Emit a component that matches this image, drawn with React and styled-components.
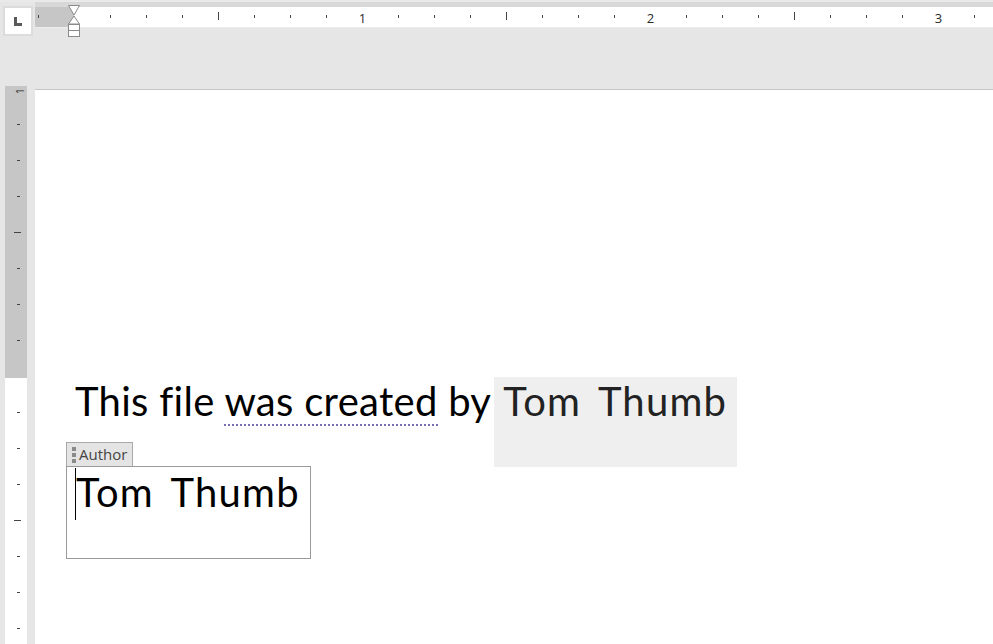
import styled, { createGlobalStyle } from 'styled-components'

const GlobalStyle = createGlobalStyle`
  html, body {
    margin: 0;
    padding: 0;
    overflow: hidden;
    background: #e6e6e6;
  }
`

const STEP = 36

const Window = styled.div`
  display: grid;
  grid-template-columns: 35px 1fr;
  grid-template-rows: 89px 1fr;
  width: 993px;
  height: 644px;
  background: #e6e6e6;
  font-family: Lato, 'Open Sans', sans-serif;
`

const Corner = styled.div`
  padding: 4px 0 0 3px;
  border-top: 2px solid #e9e9e9;
`

const TabButton = styled.div`
  display: grid;
  place-items: center;
  width: 26px;
  height: 26px;
  background: #fff;
  border: 2px solid #dcdcdc;
`

const TopArea = styled.div`
  position: relative;
  display: flex;
  flex-direction: column;
  border-top: 2px solid #e9e9e9;
`

const TopStrip = styled.div`
  height: 5px;
  background: #d8d8d8;
`

const RulerBand = styled.div`
  height: 20px;
  background: #fff;
  border-bottom: 1px solid #ededed;
`

const IndentMarker = styled.svg`
  position: absolute;
  left: 32px;
  top: 2px;
`

const SideArea = styled.div`
  margin-top: -3px;
  padding: 0 8px 0 5px;
`

const SideRuler = styled.div`
  height: 100%;
  background: #fff;
`

const Page = styled.main`
  background: #fff;
  border-top: 1px solid #c6c6c6;
  padding: 287px 0 0 31px;
`

const Content = styled.div`
  display: grid;
  grid-template-columns: auto auto;
  grid-template-rows: 65px auto;
  justify-content: start;
  color: #000;
  font-size: 40px;
  line-height: 45px;
  letter-spacing: 0.3px;
`

const Sentence = styled.div`
  grid-column: 1;
  grid-row: 1;
  padding: 2px 3px 0 9px;
  white-space: pre;
`

const Dotted = styled.span`
  padding-bottom: 1px;
  background-image: linear-gradient(to right, #7b6cb6 50%, transparent 50%);
  background-size: 4px 2px;
  background-repeat: repeat-x;
  background-position: 0 100%;
`

const Name = styled.span`
  white-space: pre;
  letter-spacing: 1.2px;
  word-spacing: -2.5px;
`

const Field = styled.div`
  grid-column: 2;
  grid-row: 1 / span 2;
  width: 243px;
  height: 90px;
  box-sizing: border-box;
  padding: 2px 0 0 9px;
  background: #efefef;
  color: #222;
`

const Control = styled.div`
  grid-column: 1;
  grid-row: 2;
  display: flex;
  flex-direction: column;
  align-items: flex-start;
`

const Tag = styled.div`
  display: flex;
  align-items: center;
  gap: 3px;
  height: 23px;
  padding: 0 5px 0 5px;
  background: #e4e4e4;
  border: 1px solid #a9a9a9;
  border-bottom: none;
  color: #444;
  font-family: 'Open Sans', 'Noto Sans', sans-serif;
  font-size: 15px;
  letter-spacing: 0;
`

const Grip = styled.div`
  display: flex;
  flex-direction: column;
  gap: 2px;
  span {
    width: 4px;
    height: 4px;
    background: #8a8a8a;
  }
`

const Box = styled.div`
  display: flex;
  align-items: flex-start;
  box-sizing: border-box;
  width: 245px;
  height: 93px;
  border: 1px solid #9a9a9a;
  padding-left: 8px;

  ${Name} {
    margin-top: 3px;
  }
`

const Caret = styled.span`
  width: 1px;
  height: 52px;
  margin-top: 1px;
  background: #000;
`

function HorizontalRuler() {
  const ticks = []
  for (let k = -1; 39 + k * STEP < 958; k++) {
    if (k === 0) continue
    const x = 39 + k * STEP + 0.5
    if (k % 8 === 0) {
      ticks.push(
        <text key={k} x={x} y={16} fontSize='13' fill='#2a2a2a' textAnchor='middle' fontFamily='Open Sans, sans-serif'>
          {k / 8}
        </text>
      )
    } else if (k % 4 === 0) {
      ticks.push(<line key={k} x1={x} x2={x} y1={5} y2={13} stroke='#444' />)
    } else {
      ticks.push(<line key={k} x1={x} x2={x} y1={8} y2={11} stroke='#444' />)
    }
  }
  return (
    <svg width='958' height='20' style={{ display: 'block' }}>
      <rect x='0' y='0' width='39' height='20' fill='#c6c6c6' />
      {ticks}
    </svg>
  )
}

function VerticalRuler() {
  const origin = 290
  const ticks = []
  for (let k = -8; origin + k * STEP < 560; k++) {
    if (k === 0) continue
    const y = origin + k * STEP + 0.5
    if (k === -8) {
      ticks.push(
        <text key={k} x={0} y={0} fontSize='11' fill='#2a2a2a' textAnchor='middle' fontFamily='Open Sans, sans-serif' transform='translate(19 5) rotate(-90)'>
          1
        </text>
      )
    } else if (k % 4 === 0) {
      ticks.push(<line key={k} x1={9} x2={16} y1={y} y2={y} stroke='#444' />)
    } else {
      ticks.push(<line key={k} x1={12} x2={15} y1={y} y2={y} stroke='#444' />)
    }
  }
  return (
    <svg width='22' height='560' style={{ display: 'block' }}>
      <rect x='0' y='0' width='22' height='292' fill='#c6c6c6' />
      {ticks}
    </svg>
  )
}

const App = () => {
  return (
    <>
      <GlobalStyle />
      <Window>
        <Corner>
          <TabButton>
            <svg width='10' height='10' viewBox='0 0 10 10'>
              <path d='M1 1h3v6h5v3H1z' fill='#5a5a5a' />
            </svg>
          </TabButton>
        </Corner>
        <TopArea>
          <TopStrip />
          <RulerBand>
            <HorizontalRuler />
          </RulerBand>
          <IndentMarker width='14' height='34' viewBox='0 0 14 34'>
            <path d='M1.5 1.5h11L7 11z' fill='#fff' stroke='#8a8a8a' />
            <path d='M7 12l5.5 8h-11z' fill='#fff' stroke='#8a8a8a' />
            <rect x='1.5' y='20.5' width='11' height='12' fill='#fff' stroke='#8a8a8a' />
            <line x1='1.5' x2='12.5' y1='26.5' y2='26.5' stroke='#8a8a8a' />
          </IndentMarker>
        </TopArea>
        <SideArea>
          <SideRuler>
            <VerticalRuler />
          </SideRuler>
        </SideArea>
        <Page>
          <Content>
            <Sentence>
              This file <Dotted>was created</Dotted> by
            </Sentence>
            <Field>
              <Name>Tom  Thumb</Name>
            </Field>
            <Control>
              <Tag>
                <Grip>
                  <span />
                  <span />
                  <span />
                </Grip>
                Author
              </Tag>
              <Box>
                <Caret />
                <Name>Tom  Thumb</Name>
              </Box>
            </Control>
          </Content>
        </Page>
      </Window>
    </>
  )
}

export default App
